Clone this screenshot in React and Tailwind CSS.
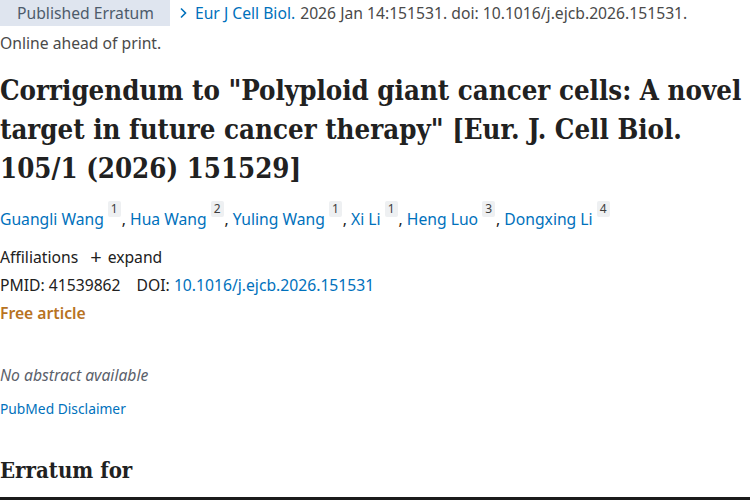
export default function App() {
  const Sup = ({ n }) => (
    <sup className="ml-[4px] mr-[1px] inline-block rounded-[2px] bg-[#eef0f2] px-[3px] text-[12px] leading-[16px] text-[#3d3d3d] align-[6px]">{n}</sup>
  );
  const authors = [
    ["Guangli Wang", 1],
    ["Hua Wang", 2],
    ["Yuling Wang", 1],
    ["Xi Li", 1],
    ["Heng Luo", 3],
    ["Dongxing Li", 4],
  ];
  const serif = "[font-family:'DejaVu_Serif_Condensed','DejaVu_Serif',serif]";
  return (
    <div className="relative h-[500px] w-[750px] overflow-hidden bg-white text-[#212121] [font-family:'Noto_Sans',sans-serif]">
      <div className="flex items-center text-[15.7px] leading-[26px]">
        <span className="bg-[#dfe5ef] pl-[17px] pr-[16px] text-[#4d5b6b]">Published Erratum</span>
        <svg className="ml-[9px]" width="9" height="12" viewBox="0 0 9 12" fill="none">
          <path d="M2 1.5 L6.5 6 L2 10.5" stroke="#0071bc" strokeWidth="1.6" />
        </svg>
        <span className="ml-[7px] text-[#0071bc]">Eur J Cell Biol.</span>
        <span className="ml-[5px] text-[#4a4a4a]">2026 Jan 14:151531. doi: 10.1016/j.ejcb.2026.151531.</span>
      </div>
      <div className="mt-[6px] text-[15.7px] leading-[22px] text-[#4a4a4a]">Online ahead of print.</div>
      <h1 className={`mt-[17px] whitespace-nowrap text-[27.4px] font-bold leading-[39px] text-[#212121] ${serif}`}>
        Corrigendum to "Polyploid giant cancer cells: A novel
        <br />
        target in future cancer therapy" [Eur. J. Cell Biol.
        <br />
        105/1 (2026) 151529]
      </h1>
      <div className="mt-[19px] text-[15.7px] leading-[24px]">
        {authors.map(([name, n], i) => (
          <span key={name}>
            <span className="text-[#0071bc]">{name}</span>
            <Sup n={n} />
            {i < authors.length - 1 && <span>, </span>}
          </span>
        ))}
      </div>
      <div className="mt-[14px] flex items-center text-[15.7px] leading-[24px]">
        <span>Affiliations</span>
        <span className="ml-[12px] text-[20px] leading-none">+</span>
        <span className="ml-[6px]">expand</span>
      </div>
      <div className="mt-[4px] text-[15.7px] leading-[24px]">
        <span>PMID: 41539862</span>
        <span className="ml-[16px]">DOI: </span>
        <span className="text-[#0071bc]">10.1016/j.ejcb.2026.151531</span>
      </div>
      <div className="mt-[4px] text-[15.7px] font-semibold leading-[24px] text-[#b8731f]">Free article</div>
      <div className="mt-[38px] text-[15.7px] italic leading-[24px] text-[#5b616b]">No abstract available</div>
      <div className="mt-[10px] text-[13.8px] leading-[24px] text-[#0071bc]">PubMed Disclaimer</div>
      <h2 className={`mt-[34px] text-[22px] font-bold leading-[30px] text-[#212121] ${serif}`}>Erratum for</h2>
      <div className="absolute bottom-0 left-0 h-[3px] w-full bg-[#1b1b1b]" />
    </div>
  );
}
